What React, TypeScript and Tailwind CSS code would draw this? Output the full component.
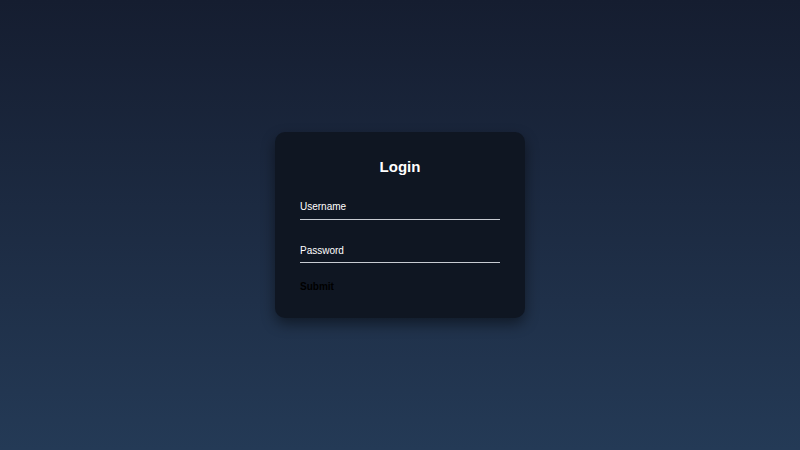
import { useState } from "react";

const LoginCard: React.FC = () => {
  const [username, setUsername] = useState("");
  const [password, setPassword] = useState("");

  return (
    <form
      onSubmit={(e) => e.preventDefault()}
      className="w-[250px] rounded-[10px] bg-[#0f1622] px-[25px] pt-[26px] pb-[25px] shadow-[0_6px_14px_rgba(0,0,0,0.45)] flex flex-col"
    >
      <h2 className="text-[15px] leading-[18px] font-bold text-white text-center">Login</h2>
      <input
        value={username}
        onChange={(e) => setUsername(e.target.value)}
        placeholder="Username"
        className="mt-[23px] w-full bg-transparent outline-none border-b border-[#c8ccd2] pt-[2px] pb-[6px] text-[10px] leading-[12px] text-white placeholder:text-white"
      />
      <input
        type="password"
        value={password}
        onChange={(e) => setPassword(e.target.value)}
        placeholder="Password"
        className="mt-[23px] w-full bg-transparent outline-none border-b border-[#c8ccd2] pt-[2px] pb-[5px] text-[10px] leading-[12px] text-white placeholder:text-white"
      />
      <button
        type="submit"
        className="mt-[18px] self-start bg-transparent p-0 text-[10px] leading-[12px] font-bold text-black"
      >
        Submit
      </button>
    </form>
  );
};

export default function App() {
  return (
    <div className="w-full h-[450px] bg-gradient-to-b from-[#151d30] to-[#243a56] flex items-center justify-center font-['Liberation_Sans',Arial,sans-serif]">
      <LoginCard />
    </div>
  );
}
